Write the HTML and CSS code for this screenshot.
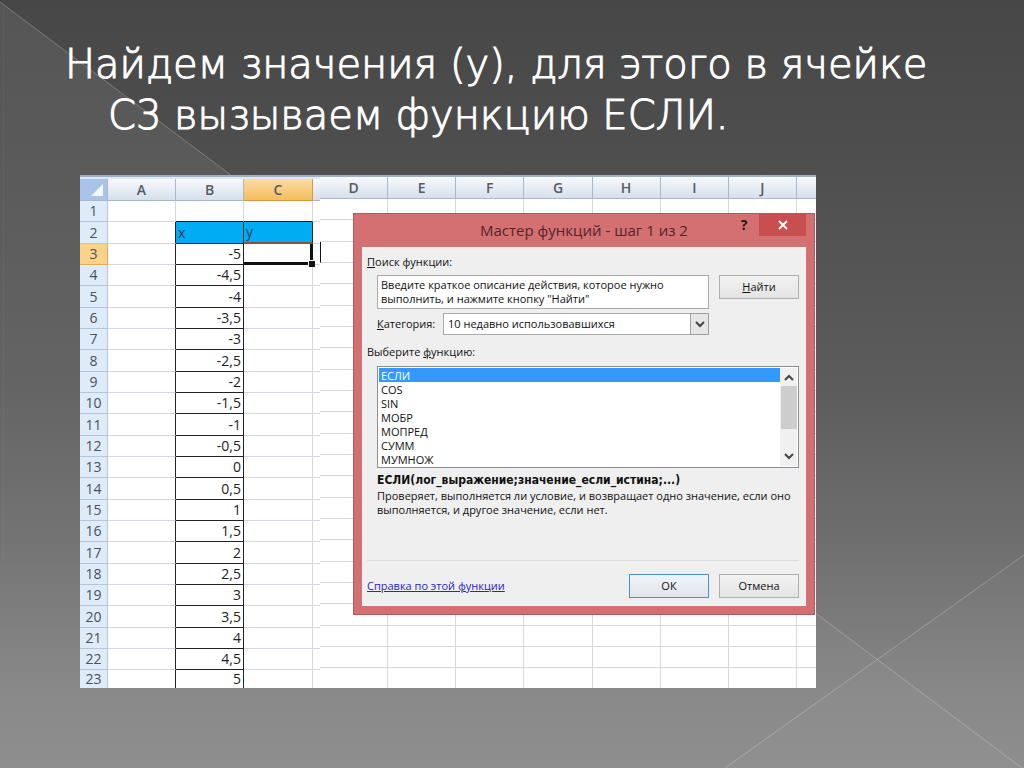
FILE: index.html
```html
<!DOCTYPE html>
<html lang="ru">
<head>
    <meta charset="UTF-8">
    <meta name="viewport" content="width=device-width, initial-scale=1.0">
    <title>Функция ЕСЛИ</title>
    <link rel="stylesheet" href="styles.css">
</head>
<body>
    <div class="slide">
        <svg class="backdrop" viewBox="0 0 1024 768" preserveAspectRatio="none" aria-hidden="true">
            <defs>
                <linearGradient id="shade" x1="0" y1="0" x2="0" y2="1">
                    <stop offset="0" stop-color="#fff" stop-opacity="0.08"/>
                    <stop offset="1" stop-color="#fff" stop-opacity="0.02"/>
                </linearGradient>
            </defs>
            <path d="M0 2L1022 768H0Z" fill="url(#shade)"/>
            <path d="M1024 555V768H725Z" fill="#fff" fill-opacity="0.02"/>
            <path d="M0 2L1022 768M1024 555L725 768" fill="none" stroke="#fff" stroke-opacity="0.24"/>
            <path d="M3.500 5V560" stroke="#fff" stroke-opacity="0.04"/>
        </svg>
        <h1 class="title">Найдем значения (у), для этого в ячейке<br>С3 вызываем функцию ЕСЛИ.</h1>
        <div class="sheet">
            <table class="grid grid-left">
                <thead>
                    <tr>
                        <th class="corner"><svg width="12" height="12" viewBox="0 0 12 12" aria-hidden="true"><path d="M12 0V12H0Z" fill="#f1f7fd"/></svg></th>
                        <th>A</th>
                        <th>B</th>
                        <th class="active">C</th>
                        <th class="rest"></th>
                    </tr>
                </thead>
                <tbody class="left-rows"></tbody>
            </table>
            <table class="grid grid-right">
                <thead>
                    <tr>
                        <th>D</th>
                        <th>E</th>
                        <th>F</th>
                        <th>G</th>
                        <th>H</th>
                        <th>I</th>
                        <th>J</th>
                        <th class="rest"></th>
                    </tr>
                </thead>
                <tbody class="right-rows"></tbody>
            </table>

            <form class="dialog">
                <div class="titlebar">
                    <h2>Мастер функций - шаг 1 из 2</h2>
                    <div class="window-btns">
                        <button type="button" class="help-btn" aria-label="Справка">?</button>
                        <button type="button" class="close-btn" aria-label="Закрыть">
                            <svg width="10" height="10" viewBox="0 0 10 10"><path d="M1 1L9 9M9 1L1 9" stroke="#fff" stroke-width="1.800"/></svg>
                        </button>
                    </div>
                </div>
                <div class="dialog-body">
                    <label class="caption" for="search"><u>П</u>оиск функции:</label>
                    <div class="search-row">
                        <textarea id="search" rows="2">Введите краткое описание действия, которое нужно
выполнить, и нажмите кнопку "Найти"</textarea>
                        <button type="button" class="btn"><span><u>Н</u>айти</span></button>
                    </div>
                    <div class="category-row">
                        <label for="category"><u>К</u>атегория:</label>
                        <div class="dropdown">
                            <select id="category">
                                <option>10 недавно использовавшихся</option>
                            </select>
                            <span class="arrow"><svg width="10" height="7" viewBox="0 0 10 7"><path d="M1 1L5 5L9 1" fill="none" stroke="#444" stroke-width="2"/></svg></span>
                        </div>
                    </div>
                    <label class="caption" for="functions">Выберите <u>ф</u>ункцию:</label>
                    <div class="listbox">
                        <select id="functions" size="7">
                            <option selected>ЕСЛИ</option>
                            <option>COS</option>
                            <option>SIN</option>
                            <option>МОБР</option>
                            <option>МОПРЕД</option>
                            <option>СУММ</option>
                            <option>МУМНОЖ</option>
                        </select>
                        <div class="scrollbar">
                            <svg width="10" height="7" viewBox="0 0 10 7"><path d="M1 6L5 2L9 6" fill="none" stroke="#444" stroke-width="2"/></svg>
                            <div class="thumb"></div>
                            <svg width="10" height="7" viewBox="0 0 10 7"><path d="M1 1L5 5L9 1" fill="none" stroke="#444" stroke-width="2"/></svg>
                        </div>
                    </div>
                    <div class="syntax">ЕСЛИ(лог_выражение;значение_если_истина;...)</div>
                    <p class="description">Проверяет, выполняется ли условие, и возвращает одно значение, если оно<br>выполняется, и другое значение, если нет.</p>
                    <div class="footer">
                        <a href="#">Справка по этой функции</a>
                        <div class="footer-btns">
                            <button type="submit" class="btn btn-default">ОК</button>
                            <button type="button" class="btn">Отмена</button>
                        </div>
                    </div>
                </div>
            </form>
        </div>
    </div>
    <script>
        const leftRows = document.querySelector(".left-rows");
        const rightRows = document.querySelector(".right-rows");

        for (let row = 1; row <= 23; row++) {
            let b = "";
            let c = "";
            if (row === 2) {
                b = "x";
                c = "y";
            } else if (row > 2) {
                // x goes from -5 to 5 with step 0,5
                b = String(-5 + (row - 3) * 0.5).replace(".", ",");
            }
            leftRows.innerHTML += `<tr><th>${row}</th><td></td><td>${b}</td><td>${c}</td><td></td></tr>`;
            rightRows.innerHTML += "<tr>" + "<td></td>".repeat(8) + "</tr>";
        }
    </script>
</body>
</html>
```
FILE: styles.css
```css
* {
    box-sizing: border-box;
}
body {
    margin: 0;
}
.slide {
    position: relative;
    min-height: 100vh;
    padding: 39px 208px 80px 80px;
    background: linear-gradient(#474747 0%, #4e4e4e 20%, #5c5c5c 50%, #6e6e6e 70%, #868686 90%, #8c8c8c 100%);
}
.backdrop {
    position: absolute;
    inset: 0;
    width: 100%;
    height: 100%;
}
.title {
    position: relative;
    margin: 0 -160px 34px 0;
    padding-left: 28px;
    text-indent: -43px;
    color: #fff;
    font: 200 40px/51px "DejaVu Sans", "Open Sans", sans-serif;
    -webkit-text-stroke: 1px #fff;
    white-space: nowrap;
}

/* spreadsheet */
.sheet {
    position: relative;
    display: flex;
    align-items: flex-start;
    background: #fff;
    border-top: 2px solid #9fb0c4;
}
.grid {
    table-layout: fixed;
    border-collapse: separate;
    border-spacing: 0;
    font: 14px/18px "Open Sans", sans-serif;
    color: #222;
}
.grid-left {
    width: 240px;
    border-top: 2px solid #dfe8f3;
}
.grid-right {
    flex: 1;
    width: 0;
}
.grid th,
.grid td {
    height: 21px;
    padding: 0;
    border-right: 1px solid #d4d7e2;
    border-bottom: 1px solid #d4d7e2;
}
.grid tbody tr:nth-child(3n + 2) > * {
    height: 22px;
}
.grid tbody tr:last-child > * {
    height: 18px;
    border-bottom: 0;
}
.grid-right tbody tr:last-child > * {
    height: 20px;
}
.grid thead th {
    width: 68px;
    height: 22px;
    background: linear-gradient(#f7fafd, #d6dfeb);
    border-color: #a8b8cd;
    color: #555b63;
    font-weight: 600;
}
.grid-right thead th {
    width: auto;
}
.grid-left thead .corner {
    width: 28px;
    padding-right: 4px;
    background: #a9c3e9;
    text-align: right;
}
.corner svg {
    display: block;
    margin-left: auto;
}
.grid-left thead .active {
    width: 69px;
    background: linear-gradient(#fbdca4, #f5bd5e);
    border-color: #d99a3c;
}
.grid-left thead .rest {
    width: auto;
}
.grid-right thead .rest {
    width: 19px;
}
.grid .rest,
.grid td:last-child {
    border-right: 0;
}
.left-rows th {
    background: #deebf8;
    border-color: #b5c5da;
    color: #48525c;
    font-weight: 400;
}
.left-rows tr:nth-child(3) th {
    background: #fbd28a;
    border-color: #e2ab55;
}
.left-rows td:nth-child(3) {
    padding-right: 2px;
    text-align: right;
}
.left-rows tr:not(:first-child) td:nth-child(2),
.left-rows tr:not(:first-child) td:nth-child(3) {
    border-right-color: #222;
}
.left-rows td:nth-child(3),
.left-rows tr:first-child td:nth-child(4) {
    border-bottom-color: #222;
}
.left-rows tr:nth-child(2) td:nth-child(3),
.left-rows tr:nth-child(2) td:nth-child(4) {
    padding-left: 2px;
    background: #00adf3;
    border-right-color: #222;
    color: #1d3c55;
    text-align: left;
}
.left-rows tr:nth-child(2) td:nth-child(4) {
    border-bottom: 2px solid #8d4f42;
}
.left-rows tr:nth-child(3) td:nth-child(4) {
    position: relative;
    border-right: 3px solid #111;
    border-bottom: 3px solid #111;
}
/* fill handle of the selected cell */
.left-rows tr:nth-child(3) td:nth-child(4)::after {
    content: "";
    position: absolute;
    right: -5px;
    bottom: -5px;
    width: 6px;
    height: 6px;
    background: #111;
    border: 1px solid #fff;
    border-width: 1px 0 0 1px;
}
.right-rows tr:nth-child(3) td:first-child {
    border-left: 1px solid #111;
}

/* dialog window */
.dialog {
    position: absolute;
    top: 36px;
    left: 273px;
    width: 462px;
    padding: 0 8px 8px;
    background: #d47072;
    border: 1px solid #b05a5c;
    font: 11px/14px "Open Sans", sans-serif;
    color: #111;
}
.titlebar {
    position: relative;
    height: 33px;
}
.titlebar h2 {
    margin: 0;
    color: #532529;
    font: 15px/33px "Open Sans", sans-serif;
    text-align: center;
}
.window-btns {
    position: absolute;
    top: 0;
    right: 0;
    display: flex;
}
.window-btns button {
    display: flex;
    align-items: center;
    justify-content: center;
    height: 22px;
    padding: 0;
    border: 0;
}
.help-btn {
    width: 30px;
    background: none;
    color: #2b1415;
    font: bold 14px/22px "Open Sans", sans-serif;
}
.close-btn {
    width: 47px;
    background: #c84f50;
}
.dialog-body {
    padding: 7px 6px 7px 4px;
    background: #f0eff0;
    border: 1px solid #f8f4f4;
}
.caption {
    display: block;
}
.search-row {
    display: flex;
    align-items: flex-start;
    gap: 10px;
    margin: 6px 0 4px 10px;
}
textarea {
    flex: 1;
    height: 34px;
    padding: 2px 3px;
    border: 1px solid #aaa;
    background: #fff;
    color: inherit;
    font: inherit;
    resize: none;
    overflow: hidden;
}
.btn {
    width: 80px;
    height: 24px;
    padding: 0;
    border: 1px solid #adadad;
    background: linear-gradient(#f2f2f2, #e4e4e4);
    color: inherit;
    font: inherit;
}
.btn-default {
    border-color: #4a90d0;
    background: linear-gradient(#eef4fa, #e2e6ea);
}
.category-row {
    display: flex;
    align-items: center;
    margin: 0 90px 10px 10px;
}
.category-row label {
    width: 66px;
}
.dropdown {
    position: relative;
    flex: 1;
}
.dropdown select {
    display: block;
    width: 100%;
    height: 22px;
    padding: 0 4px;
    appearance: none;
    border: 1px solid #aaa;
    border-radius: 0;
    background: #fff;
    color: inherit;
    font: inherit;
}
.arrow {
    position: absolute;
    top: 0;
    right: 0;
    display: flex;
    align-items: center;
    justify-content: center;
    width: 19px;
    height: 22px;
    background: #e6e6e6;
    border: 1px solid #a0a0a0;
    pointer-events: none;
}
.listbox {
    display: flex;
    margin: 7px 0 5px 10px;
    padding: 1px;
    background: #fff;
    border: 1px solid #8c8c94;
}
.listbox select {
    flex: 1;
    height: 98px;
    padding: 0;
    border: 0;
    border-radius: 0;
    background: #fff;
    color: inherit;
    font: inherit;
    overflow: hidden;
}
.listbox option {
    height: 14px;
    min-height: 0;
    padding: 0 2px;
}
.listbox option:checked {
    background: #3399ff;
    color: #fff;
}
.scrollbar {
    display: flex;
    flex-direction: column;
    align-items: center;
    width: 17px;
    padding: 6px 0;
    background: #f0f0f0;
}
.thumb {
    width: 16px;
    height: 43px;
    margin: 5px 0 auto;
    background: #cdcdcd;
}
.syntax {
    margin-left: 10px;
    font: bold 12px/14px "DejaVu Sans Condensed", "DejaVu Sans", sans-serif;
}
.description {
    margin: 2px 0 0 10px;
    white-space: nowrap;
}
.footer {
    display: flex;
    align-items: center;
    justify-content: space-between;
    margin-top: 43px;
    padding-top: 13px;
    border-top: 1px solid #dcdcdc;
}
.footer a {
    color: #2a22cc;
}
.footer-btns {
    display: flex;
    gap: 10px;
}
```
